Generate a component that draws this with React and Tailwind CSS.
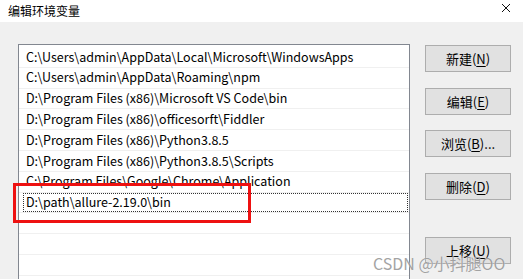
import React from 'react';

const paths = [
  'C:\\Users\\admin\\AppData\\Local\\Microsoft\\WindowsApps',
  'C:\\Users\\admin\\AppData\\Roaming\\npm',
  'D:\\Program Files (x86)\\Microsoft VS Code\\bin',
  'D:\\Program Files (x86)\\officesorft\\Fiddler',
  'D:\\Program Files (x86)\\Python3.8.5',
  'D:\\Program Files (x86)\\Python3.8.5\\Scripts',
  'C:\\Program Files\\Google\\Chrome\\Application',
  'D:\\path\\allure-2.19.0\\bin',
  '',
  '',
  '',
];

function Btn({ label, mn, tail = '', className = '' }) {
  return (
    <div className={`w-[86px] h-[27px] bg-[#e1e1e1] border border-[#adadad] flex items-center justify-center text-[13px] text-black ${className}`}>
      {label}(<span className="underline underline-offset-2">{mn}</span>){tail}
    </div>
  );
}

export default function App() {
  return (
    <div
      className="relative w-[523px] h-[279px] overflow-hidden flex flex-col bg-[#f0f0f0]"
      style={{ fontFamily: '"Noto Sans CJK SC", "Liberation Sans", sans-serif' }}
    >
      <div className="h-[22px] bg-white flex items-center justify-between pl-[8px] pr-[12px] shrink-0">
        <span className="text-[12px] text-black leading-none">编辑环境变量</span>
        <svg width="10" height="10" viewBox="0 0 10 10" className="mt-[-6px]">
          <path d="M1 1L9 9M9 1L1 9" stroke="#111" strokeWidth="1" />
        </svg>
      </div>

      <div className="flex pl-[18px] pt-[22px]">
        <div className="w-[392px] h-[260px] bg-white border border-[#828790] pt-[2px] shrink-0">
          {paths.map((p, i) => (
            <div key={i} className="h-[20.8px] border-b border-[#f0f0f0]">
              <div
                className={`h-full ml-[4px] mr-[1px] pl-[2px] flex items-center text-[12.5px] text-black whitespace-nowrap border ${
                  i === 7 ? 'border-dotted border-[#333]' : 'border-transparent'
                }`}
              >
                {p}
              </div>
            </div>
          ))}
        </div>

        <div className="flex flex-col ml-[15px] pt-[1px]">
          <Btn label="新建" mn="N" />
          <Btn label="编辑" mn="E" className="mt-[16px]" />
          <Btn label="浏览" mn="B" tail="..." className="mt-[15px]" />
          <Btn label="删除" mn="D" className="mt-[16px]" />
          <Btn label="上移" mn="U" className="mt-[37px]" />
        </div>
      </div>

      <div className="absolute left-[13px] top-[183px] w-[238px] h-[40px] border-[3px] border-[#ee1111]" />

      <div
        className="absolute left-[373px] top-[251px] text-[16px] text-[#9a9a9a] whitespace-nowrap opacity-90"
        style={{ textShadow: '0 0 1px #fff' }}
      >
        CSDN @小抖腿OO
      </div>
    </div>
  );
}
